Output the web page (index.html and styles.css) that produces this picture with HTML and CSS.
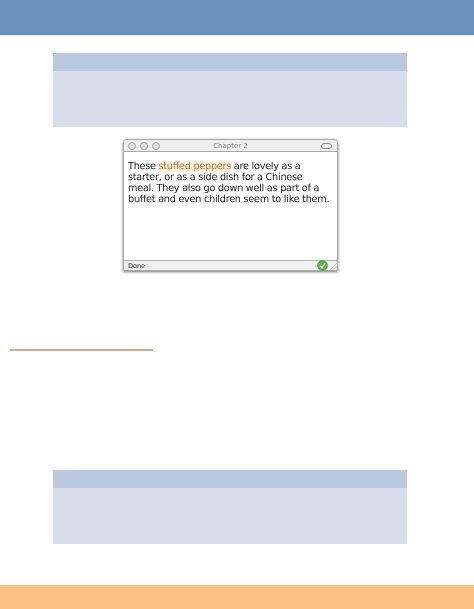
FILE: index.html
```html
<!DOCTYPE html>
<html lang="en">
<head>
  <meta charset="UTF-8">
  <title>Chapter 2</title>
  <meta name="viewport" content="width=device-width, initial-scale=1.0">
  <link rel="stylesheet" href="styles.css">
</head>
<body>

  <!-- HEADER -->
  <header class="top-band"></header>

  <main class="page">

    <!-- Empty note box -->
    <div class="note note-first">
      <div class="note-head"></div>
      <div class="note-body"></div>
    </div>

    <!-- Browser window -->
    <div class="window">
      <div class="title-bar">
        <div class="traffic">
          <span class="dot"></span>
          <span class="dot"></span>
          <span class="dot"></span>
        </div>
        <div class="title">Chapter 2</div>
        <span class="pill"></span>
      </div>
      <div class="content">
        <p>These <span class="term">stuffed peppers</span> are lovely as a<br>starter, or as a side dish for a Chinese<br>meal. They also go down well as part of a<br>buffet and even children seem to like them.</p>
      </div>
      <div class="status-bar">
        <span class="status-text">Done</span>
        <svg class="status-ok" width="11" height="11" viewBox="0 0 11 11">
          <circle cx="5.5" cy="5.5" r="5" fill="#62ad4c" stroke="#4d8f3c" stroke-width="0.6"/>
          <path d="M3 5.6 L5 7.8 L8.2 3.2" fill="none" stroke="#cfe8c4" stroke-width="1.4"/>
        </svg>
        <svg class="grip" width="8" height="8" viewBox="0 0 8 8">
          <path d="M8 1 L1 8 M8 4 L4 8" stroke="#c4c4c4" stroke-width="0.8"/>
        </svg>
      </div>
    </div>

    <div class="rule"></div>

    <!-- Second note box -->
    <div class="note note-second">
      <div class="note-head"></div>
      <div class="note-body"></div>
    </div>

  </main>

  <footer class="bottom-band"></footer>

</body>
</html>
```

FILE: styles.css
```css
* {
  box-sizing: border-box;
  margin: 0;
  padding: 0;
}

body {
  width: 474px;
  height: 609px;
  display: flex;
  flex-direction: column;
  background: #fff;
  font-family: "DejaVu Sans", "Liberation Sans", sans-serif;
  overflow: hidden;
}

.top-band {
  height: 35px;
  background: #6b91bd;
  border-bottom: 1px solid #5f83ad;
}

.page {
  flex: 1;
  display: flex;
  flex-direction: column;
}

.bottom-band {
  height: 24px;
  background: #fdc187;
}

.note {
  width: 354px;
  margin-left: 53px;
}

.note-first {
  margin-top: 18px;
}

.note-second {
  margin-top: 119px;
}

.note-head {
  height: 18px;
  background: #bac9e0;
}

.note-body {
  height: 56px;
  background: #d7deeb;
}

.window {
  width: 215px;
  height: 132px;
  margin: 12px 0 0 123px;
  display: flex;
  flex-direction: column;
  background: #fff;
  border: 1px solid #a8a8a8;
  border-radius: 4px 4px 0 0;
  box-shadow: 0 1px 3px rgba(0, 0, 0, 0.55);
  filter: blur(0.3px);
}

.title-bar {
  height: 12px;
  flex-shrink: 0;
  display: grid;
  grid-template-columns: 1fr auto 1fr;
  align-items: center;
  padding: 0 4px;
  background: #efefef;
  border-bottom: 1px solid #a9a9a9;
  border-radius: 3px 3px 0 0;
}

.traffic {
  display: flex;
  gap: 4px;
}

.dot {
  width: 8px;
  height: 8px;
  border-radius: 50%;
  border: 1px solid #a5a5a5;
  background: #e0e0e0;
}

.title {
  font-size: 7px;
  color: #8a8a8a;
}

.pill {
  justify-self: end;
  width: 11px;
  height: 6px;
  margin-right: 1px;
  border-radius: 3px;
  border: 1px solid #8c8c8c;
  background: #ececec;
}

.content {
  flex: 1;
  padding: 9px 4px 0;
  font-size: 9.700px;
  letter-spacing: -0.26px;
  line-height: 11px;
  color: #222;
  white-space: nowrap;
  text-rendering: geometricPrecision;
}

.term {
  color: #bd7049;
  background: #fff3d9;
}

.status-bar {
  height: 10px;
  flex-shrink: 0;
  display: flex;
  align-items: center;
  padding: 0 0 0 4px;
  background: #efefef;
  border-top: 1px solid #b5b5b5;
}

.status-text {
  flex: 1;
  font-size: 6.500px;
  color: #222;
}

.status-ok {
  margin-right: 1px;
}

.grip {
  align-self: flex-end;
}

.rule {
  width: 143px;
  height: 2px;
  margin: 78px 0 0 10px;
  background: #d1a98d;
}
```
